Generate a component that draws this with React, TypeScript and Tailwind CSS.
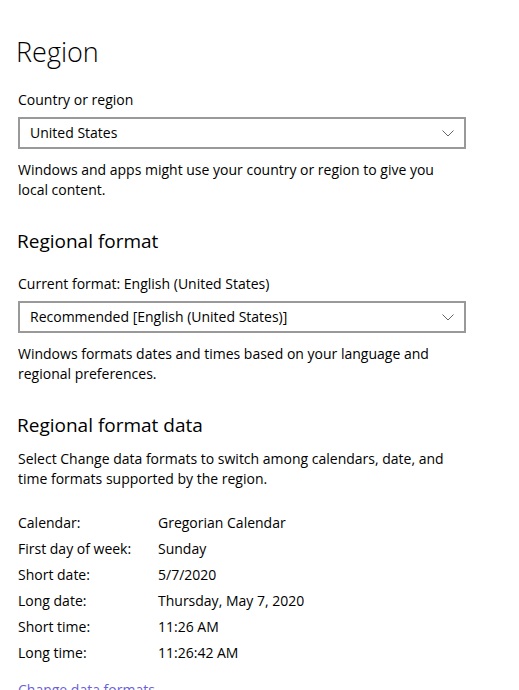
const font = { fontFamily: '"Open Sans", "Noto Sans", Arial, sans-serif' };

function Chevron() {
  return (
    <svg width="12" height="7" viewBox="0 0 12 7" fill="none" className="mr-[10px] shrink-0">
      <path d="M0.5 0.5 L6 6 L11.5 0.5" stroke="#666" strokeWidth="1" />
    </svg>
  );
}

function Select({ value }: { value: string }) {
  return (
    <div className="flex h-[32px] w-[448px] items-center justify-between border-2 border-[#999999] bg-white pl-[10px]">
      <span className="text-[14px] leading-5 text-black">{value}</span>
      <Chevron />
    </div>
  );
}

const rows: [string, string][] = [
  ["Calendar:", "Gregorian Calendar"],
  ["First day of week:", "Sunday"],
  ["Short date:", "5/7/2020"],
  ["Long date:", "Thursday, May 7, 2020"],
  ["Short time:", "11:26 AM"],
  ["Long time:", "11:26:42 AM"],
];

export default function App() {
  return (
    <div style={font} className="h-[690px] w-[519px] overflow-hidden bg-white pl-[18px] pt-[34px] text-black">
      <h1 className="-ml-[2px] text-[27px] font-light leading-9">Region</h1>

      <p className="mt-[20px] text-[14px] leading-5">Country or region</p>
      <div className="mt-[7px]">
        <Select value="United States" />
      </div>
      <p className="mt-[11px] w-[440px] text-[14px] leading-5">
        Windows and apps might use your country or region to give you local content.
      </p>

      <h2 className="-ml-[1px] mt-[27px] text-[19px] leading-7">Regional format</h2>
      <p className="mt-[19px] text-[14px] leading-5">Current format: English (United States)</p>
      <div className="mt-[7px]">
        <Select value="Recommended [English (United States)]" />
      </div>
      <p className="mt-[11px] w-[450px] text-[14px] leading-5">
        Windows formats dates and times based on your language and regional preferences.
      </p>

      <h2 className="-ml-[1px] mt-[27px] text-[19px] leading-7">Regional format data</h2>
      <p className="mt-[10px] w-[450px] text-[14px] leading-5">
        Select Change data formats to switch among calendars, date, and time formats supported by the region.
      </p>

      <div className="mt-[21px] grid grid-cols-[140px_1fr] text-[14px] leading-[26px]">
        {rows.map(([k, v]) => (
          <div key={k} className="contents">
            <span>{k}</span>
            <span>{v}</span>
          </div>
        ))}
      </div>

      <p className="mt-[14px] text-[14px] leading-5 text-[#6b5fd6]">Change data formats</p>
    </div>
  );
}
